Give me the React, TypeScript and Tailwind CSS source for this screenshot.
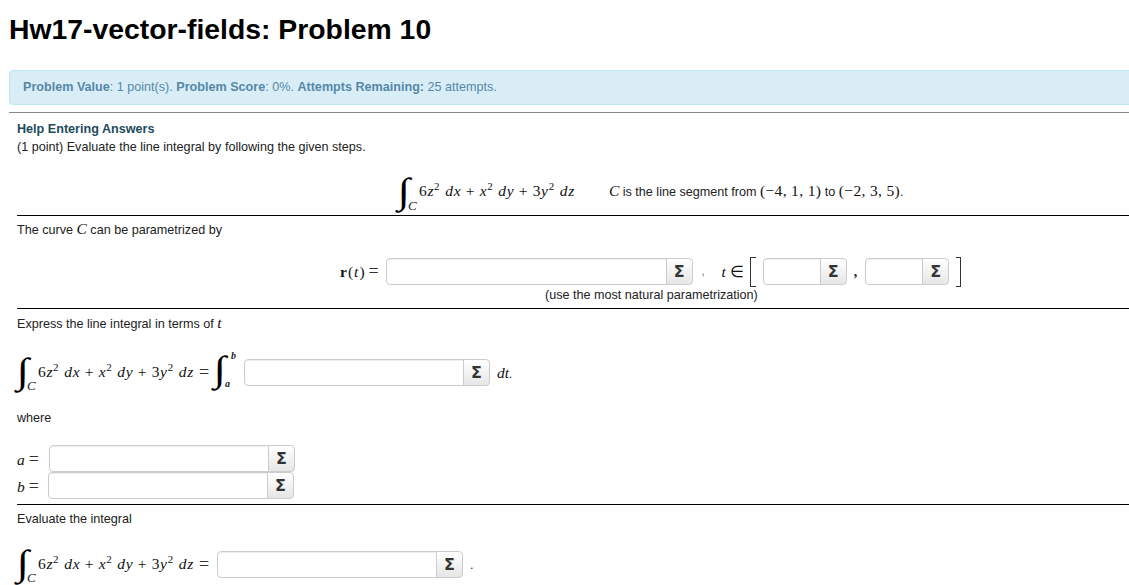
import React from "react";

function I({ children }: { children: React.ReactNode }) {
  return <i className="italic">{children}</i>;
}

function Sup({ children }: { children: React.ReactNode }) {
  return <sup className="relative top-[-6px] text-[11px] leading-none align-baseline not-italic">{children}</sup>;
}

function M({ children, className = "" }: { children: React.ReactNode; className?: string }) {
  return <span className={"font-['Liberation_Serif',serif] text-[15.5px] leading-none whitespace-nowrap text-[#111] font-medium " + className}>{children}</span>;
}

function Expr() {
  return (
    <M className="tracking-[0.65px]">
      6<I>z</I><Sup>2</Sup><span className="ml-[5px]" /><I>dx</I> + <I>x</I><Sup>2</Sup><span className="ml-[5px]" /><I>dy</I> + 3<I>y</I><Sup>2</Sup><span className="ml-[5px]" /><I>dz</I>
    </M>
  );
}

function Integral({ lower = "C", upper }: { lower?: string; upper?: string }) {
  return (
    <span className="relative inline-block w-[19px] h-[37px] shrink-0 font-['Liberation_Serif',serif]">
      <span className="absolute left-[1px] top-[-3px] text-[36px] leading-[40px] text-black italic scale-x-125">∫</span>
      {upper && <i className="absolute left-[17px] top-[-1px] text-[10px] leading-none font-bold">{upper}</i>}
      <i className={"absolute leading-none " + (lower === "C" ? "left-[10px] top-[25px] text-[13px]" : "left-[11px] top-[27px] text-[10px] font-bold")}>{lower}</i>
    </span>
  );
}

function Eq() {
  return <span className="font-['Liberation_Serif',serif] text-[18px] text-[#333] leading-none">=</span>;
}

function Field({ w, className = "" }: { w: number; className?: string }) {
  return (
    <span className={"inline-flex h-[27px] shrink-0 " + className}>
      <input
        readOnly
        style={{ width: w }}
        className="h-[27px] bg-white border border-[#ccc] rounded-l-[4px] shadow-[inset_0_1px_1px_rgba(0,0,0,0.07)] outline-none"
      />
      <button className="w-[27px] h-[27px] -ml-px border border-[#ccc] rounded-r-[4px] bg-gradient-to-b from-white to-[#e6e6e6] flex items-center justify-center text-[16px] font-bold text-[#333] font-['DejaVu_Sans',sans-serif] leading-none">
        Σ
      </button>
    </span>
  );
}

function Rule({ className = "" }: { className?: string }) {
  return <div className={"h-px bg-black " + className} />;
}

export default function App() {
  return (
    <div className="w-[1129px] h-[585px] overflow-hidden bg-white text-[12.6px] leading-[18px] text-[#222] font-['Liberation_Sans',Arial,sans-serif]">
      <h1 className="pl-[9px] pt-[14px] h-[70px] text-[28.35px] leading-[30px] font-bold text-black whitespace-nowrap">Hw17-vector-fields: Problem 10</h1>

      <div className="ml-[9px] w-[1140px] h-[35px] pl-[13px] pb-[2px] flex items-center bg-[#d9edf7] border border-[#bce8f1] rounded-[4px] text-[#5588a8]">
        <span>
          <b>Problem Value</b>: 1 point(s). <b>Problem Score</b>: 0%. <b>Attempts Remaining:</b> 25 attempts.
        </span>
      </div>

      <div className="ml-[9px] mt-[7px] h-px bg-[#888]" />

      <div className="pl-[17px]">
        <div className="pt-[7px] font-bold text-[#1c4b5c]">Help Entering Answers</div>
        <div>(1 point) Evaluate the line integral by following the given steps.</div>

        <div className="h-[59px] flex items-center pl-[381px] pt-[13px]">
          <Integral />
          <span className="ml-[2px]"><Expr /></span>
          <span className="ml-[34px] whitespace-nowrap">
            <M><I>C</I></M> is the line segment from <M className="tracking-[0.35px]">(−4, 1, 1)</M> to <M className="tracking-[0.35px]">(−2, 3, 5)</M>.
          </span>
        </div>
        <Rule />
        <div className="pt-[5px] h-[22px] whitespace-nowrap">The curve <M><I>C</I></M> can be parametrized by</div>

        <div className="mt-[20px] h-[27px] flex items-center pl-[323px]">
          <M className="tracking-[1px]"><b>r</b>(<I>t</I>)</M>
          <span className="ml-[3px]"><Eq /></span>
          <Field w={281} className="ml-[7px]" />
          <span className="ml-[9px] text-[10px] text-[#555]">,</span>
          <M className="ml-[17px]"><I>t</I> ∈</M>
          <span className="ml-[6px] w-[6px] h-[30px] border-l border-y border-[#333] shrink-0" />
          <Field w={58} className="ml-[7px]" />
          <span className="ml-[7px] text-[14px] font-['Liberation_Serif',serif] font-bold">,</span>
          <Field w={58} className="ml-[8px]" />
          <span className="ml-[7px] w-[5px] h-[30px] border-r border-y border-[#333] shrink-0" />
        </div>
        <div className="pl-[528px] h-[18px] mt-px whitespace-nowrap">(use the most natural parametrization)</div>
        <Rule className="mt-[4px]" />

        <div className="pt-[6px] h-[23px] whitespace-nowrap">Express the line integral in terms of <M><I>t</I></M></div>

        <div className="mt-[22px] h-[37px] flex items-center">
          <Integral />
          <span className="ml-[2px]"><Expr /></span>
          <span className="ml-[5px]"><Eq /></span>
          <span className="ml-[5px]"><Integral lower="a" upper="b" /></span>
          <Field w={220} className="ml-[11px]" />
          <M className="ml-[7px]"><I>dt</I><span className="text-[12px]">.</span></M>
        </div>

        <div className="mt-[18px] h-[18px]">where</div>

        <div className="mt-[18px] h-[27px] flex items-center">
          <M className="w-[32px]"><I>a</I> <Eq /></M>
          <Field w={220} />
        </div>
        <div className="h-[27px] flex items-center">
          <M className="w-[31px]"><I>b</I> <Eq /></M>
          <Field w={220} />
        </div>
        <Rule className="mt-[5px]" />
        <div className="pt-[5px] h-[22px]">Evaluate the integral</div>

        <div className="mt-[19px] h-[37px] flex items-center">
          <Integral />
          <span className="ml-[2px]"><Expr /></span>
          <span className="ml-[5px]"><Eq /></span>
          <Field w={220} className="ml-[8px]" />
          <span className="ml-[7px]">.</span>
        </div>
      </div>
    </div>
  );
}
